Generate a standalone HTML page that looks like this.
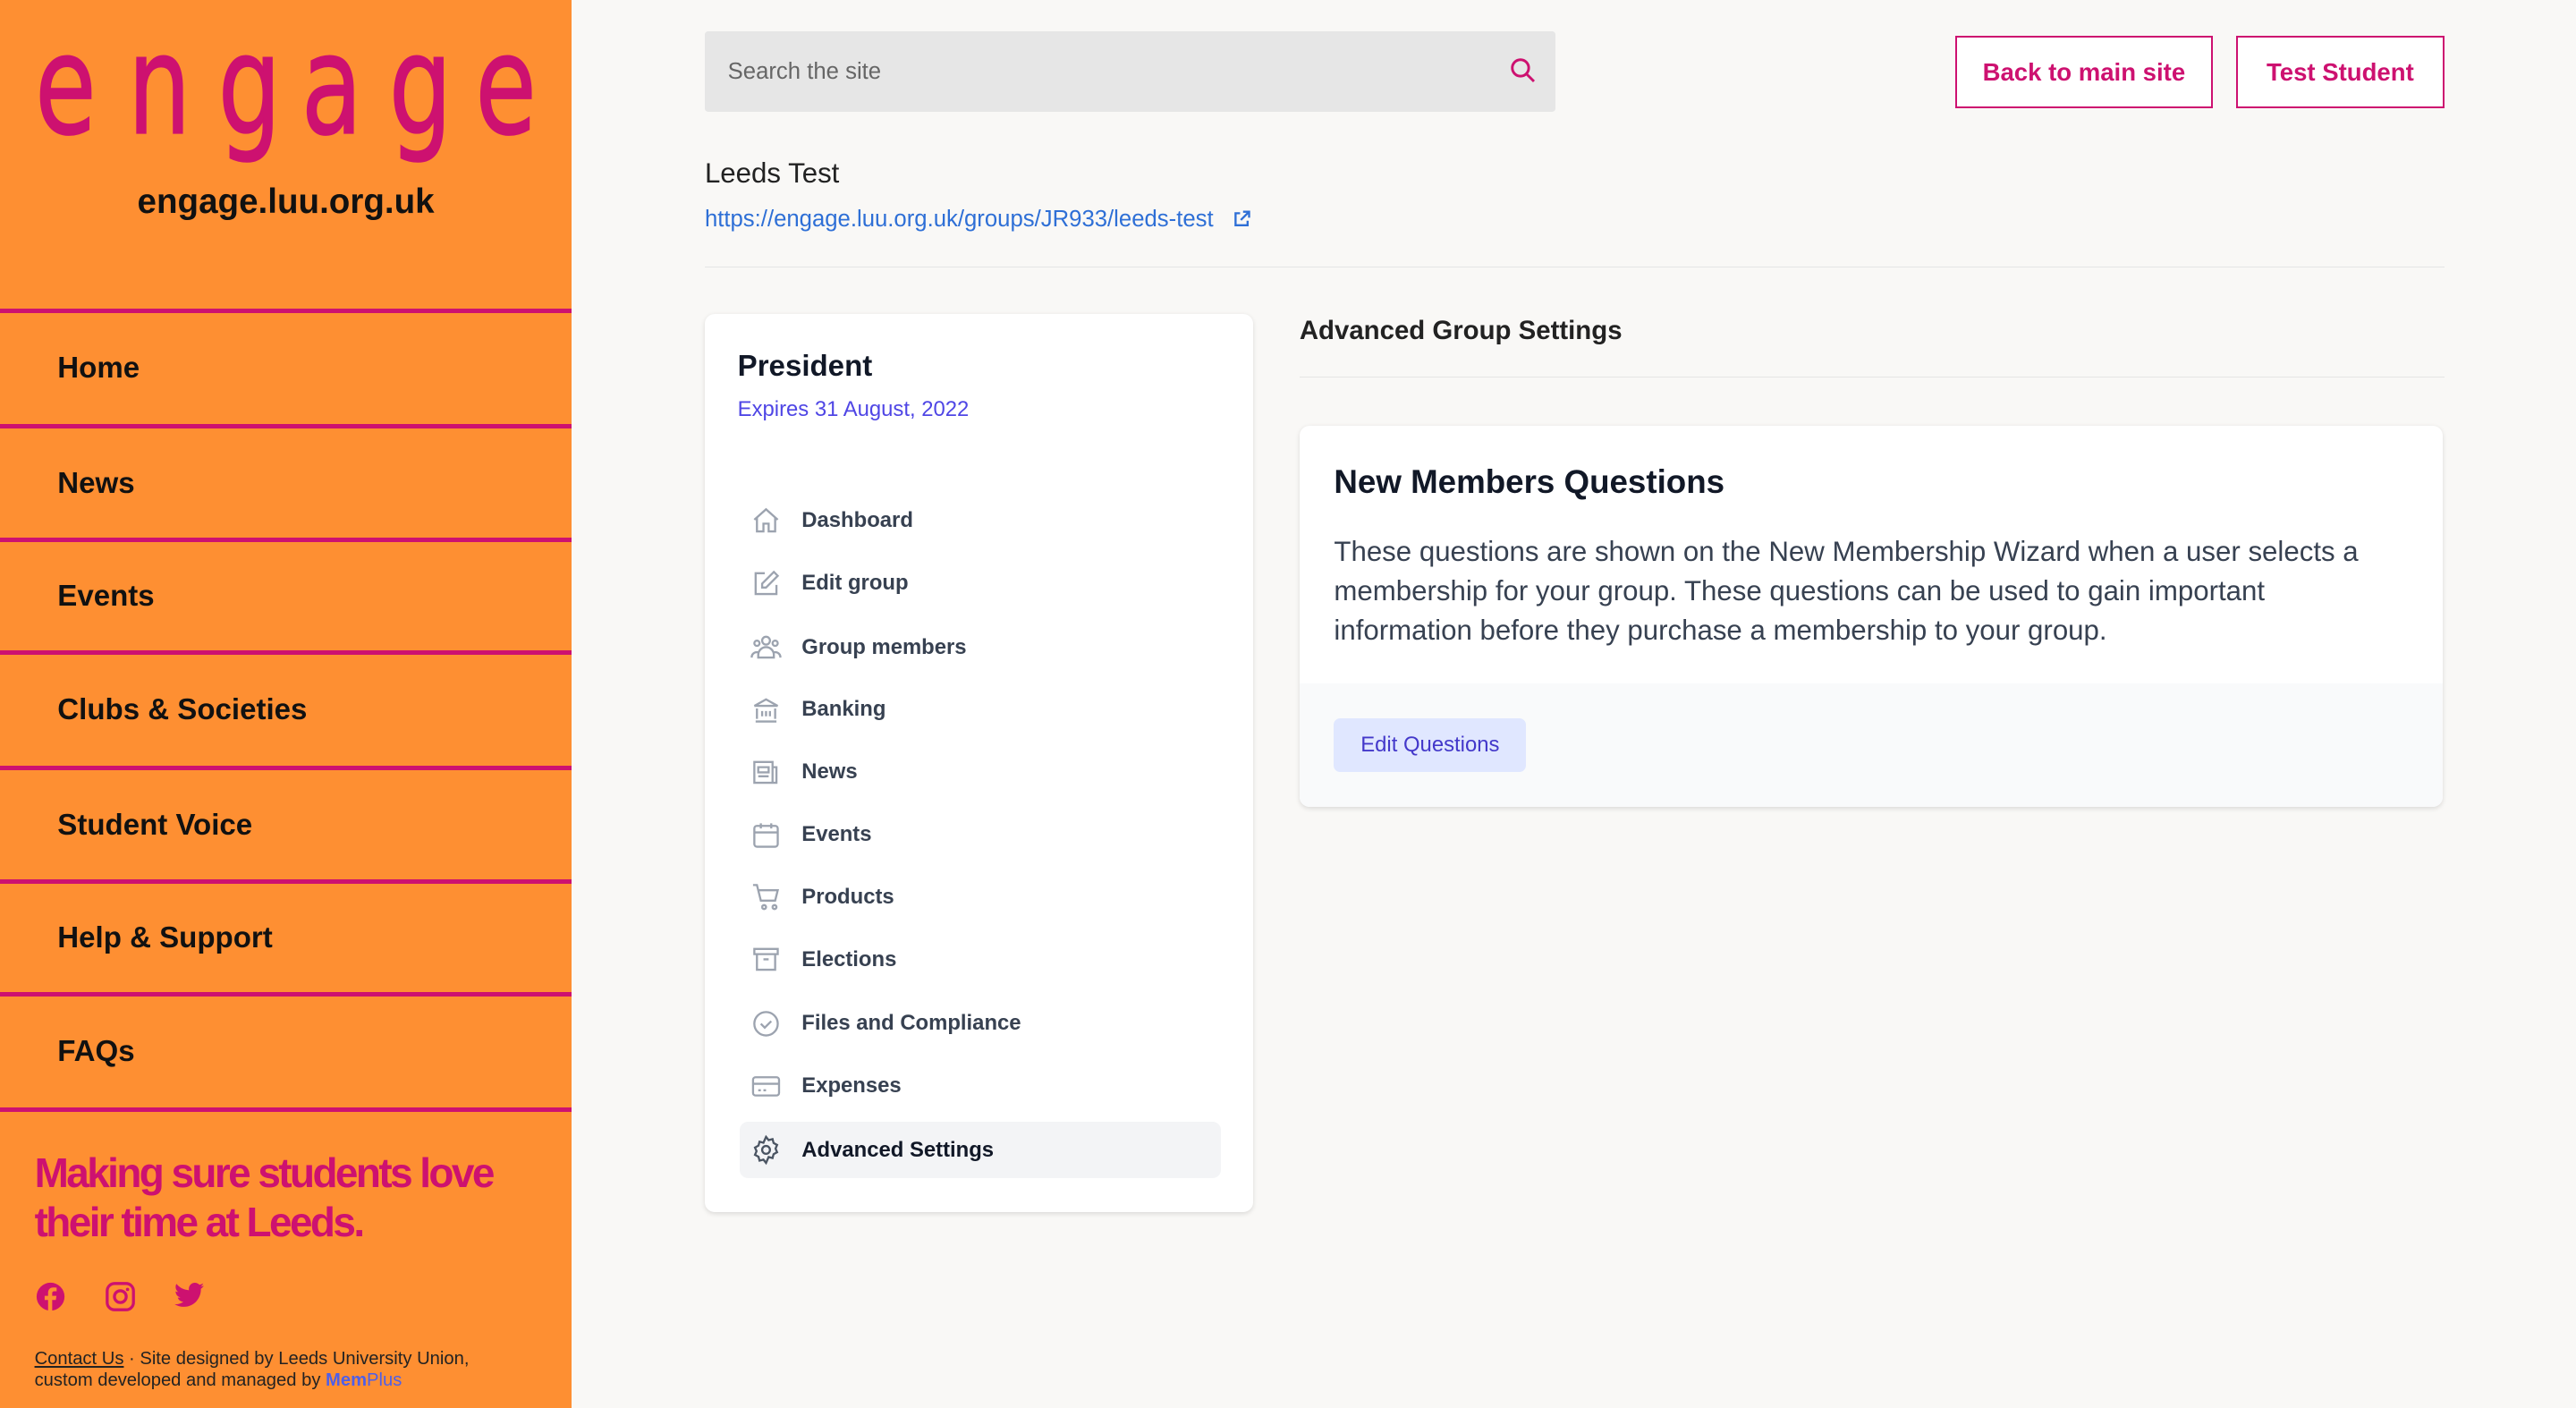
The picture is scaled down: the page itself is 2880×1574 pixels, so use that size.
<!DOCTYPE html>
<html><head><meta charset="utf-8"><style>
*{box-sizing:border-box;margin:0;padding:0}
html,body{width:2880px;height:1574px;overflow:hidden;background:#f9f8f6}
#z{zoom:1.8367;width:1568px;height:857px;position:relative;font-family:"Liberation Sans",sans-serif;color:#111827}
.side{position:absolute;left:0;top:0;width:348px;height:857px;background:#fe8f32}
.logo{position:absolute;left:0;top:0}
.dom{position:absolute;left:0;width:348px;top:111px;text-align:center;font-weight:bold;font-size:21px;color:#111}
.nav{position:absolute;left:0;width:348px;border-top:3px solid #cd1170;height:70px;padding-left:35px;font-weight:bold;font-size:18px;color:#111;display:flex;align-items:center}
.tag{position:absolute;left:21px;top:699px;font-size:25px;font-weight:bold;letter-spacing:-1.4px;color:#cd1170;line-height:30px}
.soc{position:absolute;top:780px;}
.foot{position:absolute;left:21px;top:821px;font-size:11px;line-height:13px;color:#222}
.main{position:absolute}
.search{left:429px;top:19px;width:518px;height:49px;background:#e6e6e6;border-radius:2px;font-size:14px;color:#666;padding:17px 14px}
.btn{position:absolute;top:22px;height:44px;border:1.5px solid #cd1170;color:#cd1170;font-weight:bold;font-size:15px;display:flex;align-items:center;justify-content:center;background:#fff}
.card{position:absolute;background:#fff;border-radius:6px;box-shadow:0 1px 3px rgba(0,0,0,.12)}
.mi{position:absolute;left:28px;font-size:13px;color:#374151;font-weight:bold;display:flex;align-items:center;height:20px}
.mi svg{width:19px;height:19px;margin-right:12px;margin-left:0;stroke:#9ca3af;fill:none;stroke-width:1.6}
</style></head><body><div id="z">
<div class="side">
<svg class="logo" width="348" height="110" viewBox="0 0 348 110">
<g transform="scale(0.72,1)" fill="#cd1170" stroke="#cd1170" stroke-width="1" font-family="DejaVu Sans, sans-serif" font-size="84" text-anchor="middle">
<text x="55.5" y="81">e</text><text x="134.7" y="81">n</text><text x="211" y="81">g</text><text x="280.5" y="81">a</text><text x="355.5" y="81">g</text><text x="427.7" y="81">e</text>
</g></svg>
<div class="dom">engage.luu.org.uk</div>
<div class="nav" style="top:188px">Home</div>
<div class="nav" style="top:258px">News</div>
<div class="nav" style="top:327px">Events</div>
<div class="nav" style="top:396px">Clubs &amp; Societies</div>
<div class="nav" style="top:466px">Student Voice</div>
<div class="nav" style="top:535px">Help &amp; Support</div>
<div class="nav" style="top:604px">FAQs</div>
<div class="nav" style="top:674px;height:0"></div>
<div class="tag">Making sure students love<br>their time at Leeds.</div>
<svg class="soc" style="left:22px" width="18" height="18" viewBox="0 0 18 18"><circle cx="9" cy="9" r="8.5" fill="#cd1170"/><path d="M10 18V11h2.2l.4-2.5H10V7c0-.8.3-1.3 1.4-1.3h1.3V3.5c-.4 0-1.2-.1-2-.1-2 0-3.2 1.2-3.2 3.3v1.8H5.4V11h2.1v7z" fill="#fe8f32"/></svg>
<svg class="soc" style="left:64px" width="18" height="18" viewBox="0 0 18 18"><rect x="1" y="1" width="16" height="16" rx="4.5" fill="none" stroke="#cd1170" stroke-width="1.8"/><circle cx="9" cy="9" r="3.6" fill="none" stroke="#cd1170" stroke-width="1.8"/><circle cx="13.4" cy="4.6" r="1" fill="#cd1170"/></svg>
<svg class="soc" style="left:106px" width="18" height="16" viewBox="0 0 24 20"><path fill="#cd1170" d="M24 2.4c-.9.4-1.8.6-2.8.8 1-.6 1.8-1.6 2.2-2.7-1 .6-2 1-3.1 1.2C19.3.7 18 .1 16.6.1c-2.7 0-4.9 2.2-4.9 4.9 0 .4 0 .8.1 1.1C7.7 5.9 4.1 4 1.7 1 1.2 1.7 1 2.6 1 3.5c0 1.7.9 3.2 2.2 4.1-.8 0-1.6-.2-2.2-.6v.1c0 2.4 1.7 4.4 3.9 4.8-.4.1-.8.2-1.3.2-.3 0-.6 0-.9-.1.6 2 2.4 3.4 4.6 3.4-1.7 1.3-3.8 2.1-6.1 2.1-.4 0-.8 0-1.2-.1 2.2 1.4 4.8 2.2 7.5 2.2 9.1 0 14-7.5 14-14v-.6c1-.7 1.8-1.6 2.5-2.6z"/></svg>
<div class="foot"><u>Contact Us</u> · Site designed by Leeds University Union,<br>custom developed and managed by <span style="color:#4f5fe8"><b>Mem</b>Plus</span></div>
</div>

<div class="main search">Search the site
<svg style="position:absolute;right:12px;top:16px" width="16" height="16" viewBox="0 0 16 16"><circle cx="6.5" cy="6.5" r="5" fill="none" stroke="#cd1170" stroke-width="1.6"/><path d="M10.2 10.2l4.5 4.5" stroke="#cd1170" stroke-width="1.6"/></svg></div>
<div class="btn" style="left:1190px;width:157px">Back to main site</div>
<div class="btn" style="left:1361px;width:127px">Test Student</div>

<div class="main" style="left:429px;top:96px;font-size:17px;color:#222">Leeds Test</div>
<div class="main" style="left:429px;top:126px;font-size:14px;color:#2e6fd6">https://engage.luu.org.uk/groups/JR933/leeds-test
<svg style="margin-left:8px;vertical-align:-1px" width="11" height="11" viewBox="0 0 12 12" fill="none" stroke="#2e6fd6" stroke-width="1.4"><path d="M5 2H2v8h8V7M7 1h4v4M11 1L5.5 6.5"/></svg></div>
<div class="main" style="left:429px;top:162px;width:1059px;height:1px;background:#e5e5e5"></div>

<div class="card" style="left:429px;top:191px;width:334px;height:547px">
<div style="position:absolute;left:20px;top:22px;font-size:18px;font-weight:bold">President</div>
<div style="position:absolute;left:20px;top:51px;font-size:13px;color:#4f46e5">Expires 31 August, 2022</div>
<div style="position:absolute;left:21px;top:492px;width:293px;height:34px;background:#f3f4f6;border-radius:5px"></div>
<div class="mi" style="top:116px"><svg viewBox="0 0 24 24"><path d="M3 11l9-8 9 8M5 9v11h5v-6h4v6h5V9"/></svg>Dashboard</div>
<div class="mi" style="top:154px"><svg viewBox="0 0 24 24"><path d="M11 4H4v16h16v-7M18 3l3 3-9 9H9v-3z"/></svg>Edit group</div>
<div class="mi" style="top:193px"><svg viewBox="0 0 24 24"><circle cx="12" cy="7" r="3"/><circle cx="5" cy="9" r="2"/><circle cx="19" cy="9" r="2"/><path d="M6 20v-2a6 6 0 0112 0v2zM1 20v-1a4 4 0 015-3M23 20v-1a4 4 0 00-5-3"/></svg>Group members</div>
<div class="mi" style="top:231px"><svg viewBox="0 0 24 24"><path d="M3 9l9-5 9 5M3 9h18M4 21h16M5 11v8M19 11v8M9 13v4M12 13v4M15 13v4"/></svg>Banking</div>
<div class="mi" style="top:269px"><svg viewBox="0 0 24 24"><path d="M3 4h14v16H3zM17 8h3v12h-3M6 8h8v4H6zM6 15h8"/></svg>News</div>
<div class="mi" style="top:307px"><svg viewBox="0 0 24 24"><rect x="3" y="5" width="18" height="16" rx="2"/><path d="M8 3v4M16 3v4M3 10h18"/></svg>Events</div>
<div class="mi" style="top:345px"><svg viewBox="0 0 24 24"><path d="M2 3h3l3 12h11l2-8H6M9 20a1.5 1.5 0 100-.1M17 20a1.5 1.5 0 100-.1"/></svg>Products</div>
<div class="mi" style="top:383px"><svg viewBox="0 0 24 24"><path d="M3 4h18v4H3zM5 8v12h14V8M10 12h4"/></svg>Elections</div>
<div class="mi" style="top:422px"><svg viewBox="0 0 24 24"><circle cx="12" cy="12" r="9"/><path d="M8 12l3 3 5-5"/></svg>Files and Compliance</div>
<div class="mi" style="top:460px"><svg viewBox="0 0 24 24"><rect x="2" y="5" width="20" height="14" rx="2"/><path d="M2 10h20M6 15h2M10 15h2"/></svg>Expenses</div>
<div class="mi" style="top:499px;color:#111827"><svg viewBox="0 0 24 24" style="stroke:#4b5563"><circle cx="12" cy="12" r="3"/><path d="M12 2l2 2.5 3-.8.8 3 2.7 1.5-1.2 2.8 1.2 2.8-2.7 1.5-.8 3-3-.8L12 22l-2-2.5-3 .8-.8-3L3.5 15.8l1.2-2.8-1.2-2.8L6.2 8.7l.8-3 3 .8z"/></svg>Advanced Settings</div>
</div>

<div class="main" style="left:791px;top:192px;font-size:16px;font-weight:bold;color:#222">Advanced Group Settings</div>
<div class="main" style="left:791px;top:229px;width:697px;height:1px;background:#e5e5e5"></div>
<div class="card" style="left:791px;top:259px;width:696px;height:232px;overflow:hidden">
<div style="position:absolute;left:21px;top:23px;font-size:20px;font-weight:bold">New Members Questions</div>
<div style="position:absolute;left:21px;top:65px;width:645px;font-size:17px;line-height:24px;color:#374151">These questions are shown on the New Membership Wizard when a user selects a membership for your group. These questions can be used to gain important information before they purchase a membership to your group.</div>
<div style="position:absolute;left:0;top:157px;width:696px;height:75px;background:#f9fafb"></div>
<div style="position:absolute;left:21px;top:178px;width:117px;height:33px;background:#e0e7ff;border-radius:4px;color:#4338ca;font-size:13px;display:flex;align-items:center;justify-content:center">Edit Questions</div>
</div>
</div></body></html>
